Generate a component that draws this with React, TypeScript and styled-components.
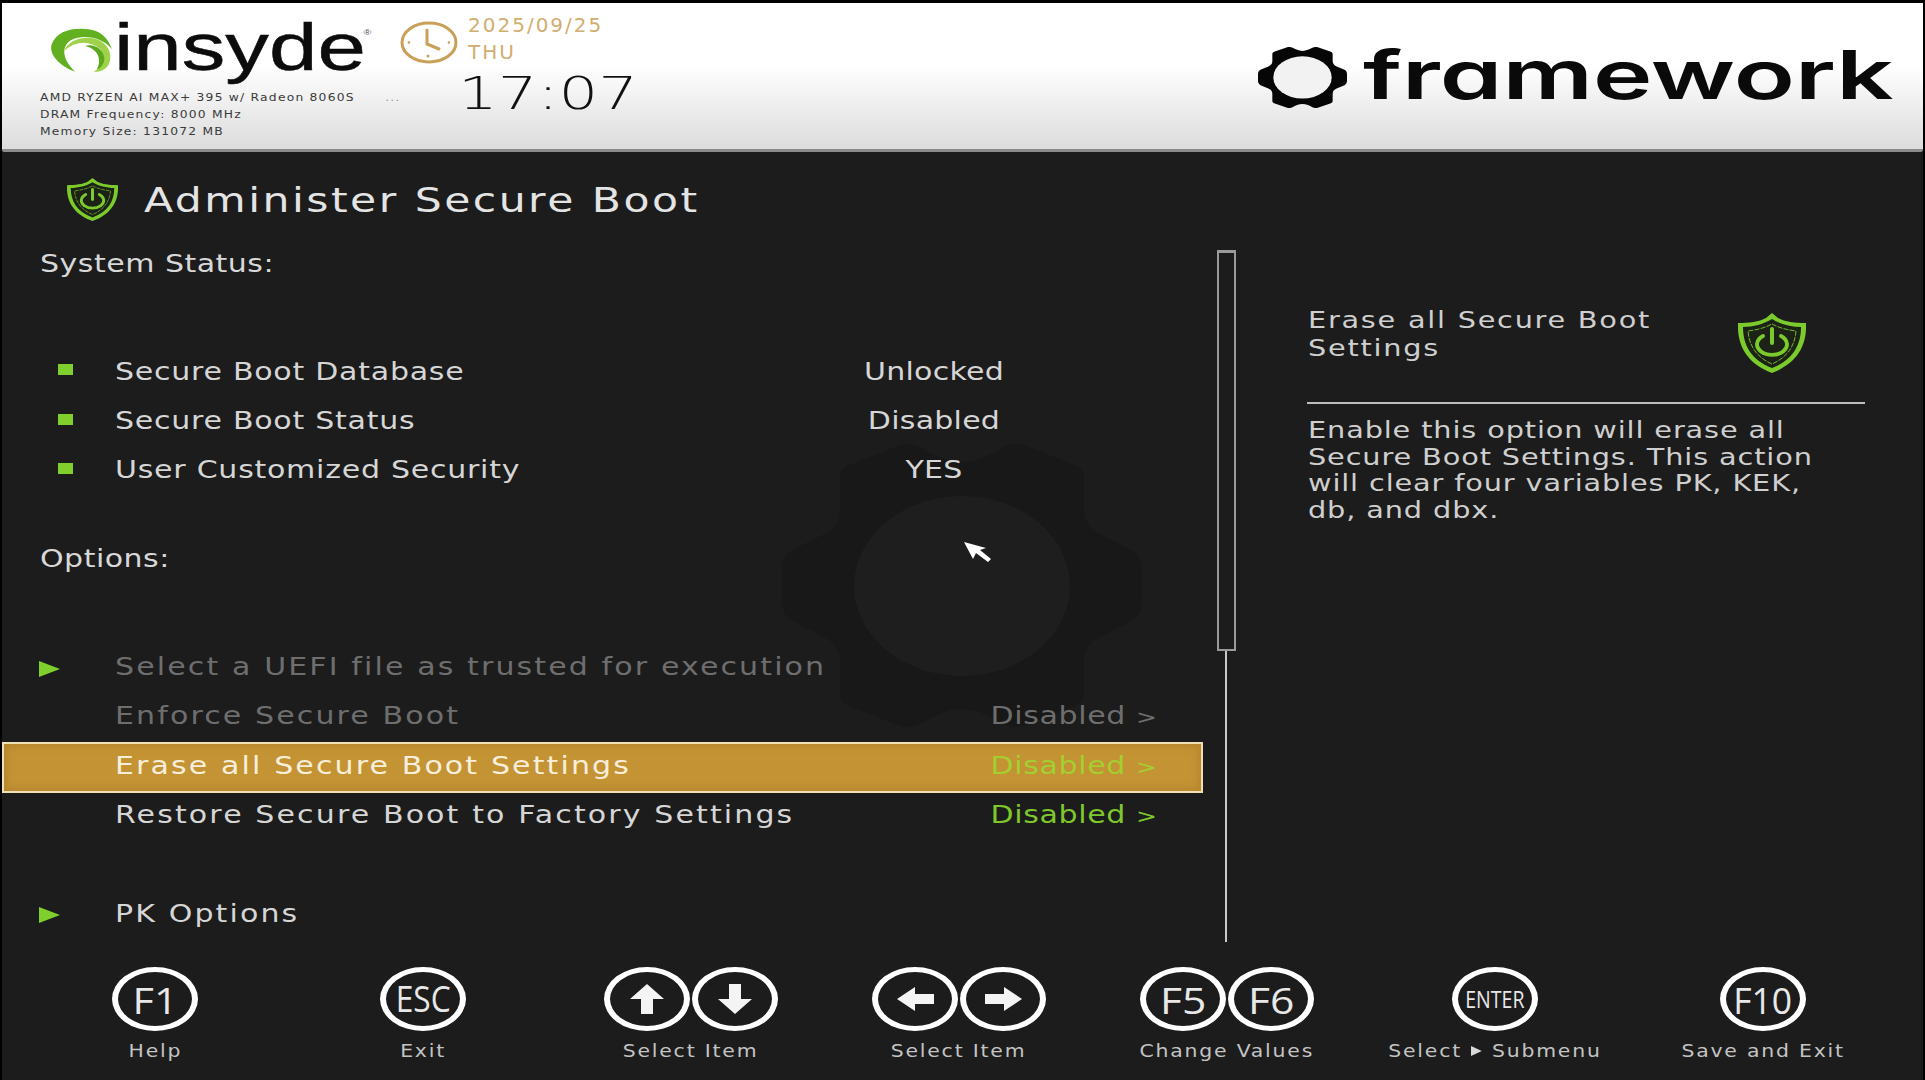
import React from 'react';
import styled, { createGlobalStyle } from 'styled-components';

const Global = createGlobalStyle`
  html, body { margin: 0; padding: 0; background: #000; overflow: hidden; }
  * { box-sizing: border-box; }
`;

const FONT = `"DejaVu Sans", "Liberation Sans", sans-serif`;

const Frame = styled.div`
  width: 1925px; height: 1080px; padding: 3px 2px 0; background: #000;
  display: flex; flex-direction: column; overflow: hidden; position: relative;
  font-family: ${FONT};
`;
const Header = styled.header`
  height: 149px; flex: none; display: flex; position: relative;
  background: linear-gradient(#fff 0, #fff 42%, #dcdcdc 100%);
  border-bottom: 3px solid #8b8b8b;
  border-radius: 0 0 2px 2px;
`;
const Brand = styled.div`
  width: 398px; padding-left: 38px; display: flex; flex-direction: column;
`;
const LogoRow = styled.div`
  height: 86px; padding: 25px 0 0 10px; display: flex; align-items: flex-start;
`;
const InsydeWord = styled.span`
  display: inline-block; font: 400 66px/1 "Liberation Sans", sans-serif; color: #0c0c0c;
  transform: scaleX(1.32); transform-origin: left top; margin: -14px 0 0 2px;
  -webkit-text-stroke: 0.5px #0c0c0c; position: relative;
  sup { position: absolute; font-size: 8px; top: 15px; left: 189px; -webkit-text-stroke: 0; color:#555; }
`;
const InfoLine = styled.div`
  height: 17px; line-height: 17px; font-size: 10.5px; letter-spacing: 1.05px; color: #3a3a3a; white-space: nowrap;
  transform: scaleX(1.17); transform-origin: left center;
  span { color: #999; margin-left: 26px; }
`;
const ClockBlock = styled.div`
  width: 300px; display: flex; align-items: flex-start;
`;
const ClockFace = styled.svg`
  width: 58px; height: 43px; flex: none; margin-top: 18px;
`;
const DateCol = styled.div`
  margin-left: 10px; padding-top: 9px; display: flex; flex-direction: column; align-items: flex-start;
`;
const DateText = styled.div`
  font-size: 20px; line-height: 27px; letter-spacing: 2px; color: #d2ad70; height: 27px;
`;
const TimeText = styled.div`
  font-size: 44px; font-weight: 300; line-height: 44px; color: #111; margin: 6px 0 0 -10px;
  display: inline-block; transform: scaleX(1.42); transform-origin: left center;
`;
const FrameworkBrand = styled.div`
  margin-left: auto; width: 665px; padding: 44px 0 0 0; display: flex; align-items: flex-start; position: relative;
`;
const GearMark = styled.svg`
  width: 89px; height: 61px; flex: none; margin-top: 0;
`;
const FrameworkWord = styled.span`
  display: inline-block; margin: -12px 0 0 16px; font: 600 67px/80px Inter, sans-serif; color: #0a0a0a;
  font-feature-settings: "cv11" 1; transform: scaleX(1.5); transform-origin: left top;
`;

const Body = styled.main`
  flex: 1; background: #1c1c1c; position: relative; display: flex; flex-direction: column; min-height: 0;
`;
const Watermark = styled.svg`
  position: absolute; left: 780px; top: 292px; width: 360px; height: 283px;
`;
const Cursor = styled.svg`
  position: absolute; left: 960px; top: 389px; width: 31px; height: 22px; z-index: 3;
`;
const TitleRow = styled.div`
  height: 87px; flex: none; padding: 8px 0 0 65px; display: flex; align-items: center; position: relative;
`;
const TitleText = styled.h1`
  margin: 0 0 0 26px; font-size: 34px; font-weight: 400; letter-spacing: 2px; color: #e4e4e4; white-space: nowrap;
  transform: scaleX(1.25); transform-origin: left center;
`;
const Columns = styled.div`
  height: 704px; flex: none; display: flex; position: relative;
`;
const List = styled.section`
  width: 1201px; flex: none; display: flex; flex-direction: column;
`;
const Row = styled.div<{ $dim?: boolean; $sel?: boolean; $gap?: number; $tight?: boolean }>`
  height: 49.25px; flex: none; display: flex; align-items: center; position: relative; padding-top: 1px;
  margin-top: ${p => p.$gap ?? 0}px;
  font-size: 24px; letter-spacing: ${p => (p.$tight ? 0.6 : 1.7)}px; white-space: nowrap;
  color: ${p => (p.$dim ? '#6e6e6e' : p.$sel ? '#f7eedb' : '#d6d6d6')};
  ${p => p.$sel ? `&::before { content: ''; position: absolute; left: 0; right: 0; top: 1px; height: 47px;
    background: #c49334; border: 2px solid #efe0b8; box-shadow: inset 0 0 7px 3px #b5862e; }` : ''}
`;
const Heading = styled(Row)`
  padding-left: 38px; color: #d8d8d8; letter-spacing: 0.4px;
`;
const HeadingText = styled.span`
  display: inline-block; transform: scaleX(1.25); transform-origin: left center;
`;
const Marker = styled.div`
  width: 113px; flex: none; padding-left: 37px; display: flex; align-items: center; position: relative;
`;
const Bullet = styled.i`
  display: block; width: 15px; height: 11px; margin: -4px 0 0 19px; background: #7fd02c;
`;
const Arrow = styled.i`
  display: block; width: 0; height: 0; border-left: 21px solid #7fd02c;
  border-top: 8px solid transparent; border-bottom: 8px solid transparent; margin-top: 3px;
`;
const Label = styled.span`
  position: relative; flex: none; display: inline-block; transform: scaleX(1.25); transform-origin: left center;
`;
const StatusValue = styled.span`
  position: absolute; left: 732px; width: 400px; text-align: center; letter-spacing: 0.2px;
  transform: scaleX(1.25); transform-origin: center;
`;
const OptionValue = styled.span<{ $c?: string }>`
  margin-left: auto; margin-right: 45px; position: relative; color: ${p => p.$c}; letter-spacing: 0.5px;
  display: inline-block; transform: scaleX(1.25); transform-origin: right center;
  small { font-size: 20px; }
`;
const Track = styled.div`
  width: 20px; flex: none; margin: 11px 0 0 13px; display: flex; flex-direction: column; align-items: center; height: 692px;
`;
const Thumb = styled.div`
  width: 19px; height: 401px; flex: none; border: 2px solid #9a9a9a; border-top-width: 3px; background: #1c1c1c;
`;
const Rail = styled.div`
  width: 2px; flex: 1; background: #c8c8c8;
`;
const Help = styled.aside`
  margin-left: 71px; width: 558px; padding-top: 66px; color: #cfcfcf; font-size: 23px;
`;
const HelpHead = styled.div`
  height: 99px; border-bottom: 2px solid #bdbdbd; display: flex; justify-content: space-between; align-items: flex-start; padding-left: 1px;
`;
const HelpTitle = styled.div`
  line-height: 28px; width: 330px; margin-top: 1px; letter-spacing: 1.4px; transform: scaleX(1.25); transform-origin: left top;
`;
const HelpShield = styled.div`
  margin: 8px 59px 0 0;
`;
const HelpBody = styled.p`
  margin: 13px 0 0 1px; line-height: 26.7px; width: 430px; letter-spacing: 0.7px; transform: scaleX(1.25); transform-origin: left top;
`;
const Footer = styled.footer`
  flex: 1; display: flex; padding: 0 0 0 19px; align-items: flex-start; position: relative;
`;
const Action = styled.div`
  width: 268px; flex: none; display: flex; flex-direction: column; align-items: center; padding-top: 24px;
`;
const Keys = styled.div`
  display: flex; gap: 2px; height: 64px;
`;
const Key = styled.div`
  width: 86px; height: 64px; border: 5px solid #fff; border-left-width: 6px; border-right-width: 6px; border-radius: 50%;
  display: flex; align-items: center; justify-content: center; color: #e8e8e8;
`;
const KeyText = styled.span<{ $size: number; $squeeze: number }>`
  display: inline-block; font: 400 ${p => p.$size}px/1 "Open Sans", sans-serif; white-space: nowrap;
  transform: scaleX(${p => p.$squeeze});
`;
const ActionLabel = styled.div`
  margin-top: 10px; font-size: 17px; line-height: 20px; letter-spacing: 1.5px; color: #c4c4c4; white-space: nowrap;
  display: flex; align-items: center; transform: scaleX(1.2);
`;
const TinyArrow = styled.i`
  display: inline-block; width: 0; height: 0; margin: 0 8px; border-left: 9px solid #d8d8d8;
  border-top: 5px solid transparent; border-bottom: 5px solid transparent;
`;

const GEAR = 'M121 0 C128 -1 133 1 140 4 C150 10 165 18 180 18 C195 18 210 10 220 4 C227 1 232 -1 239 0 L295 22 C300 25 302 28 302 35 L302 65 C302 78 308 85 318 90 L350 106 C357 110 360 118 360 126 L360 157 C360 165 357 173 350 177 L318 193 C308 198 302 205 302 218 L302 248 C302 255 300 258 295 261 L239 283 C232 284 227 282 220 279 C210 273 195 265 180 265 C165 265 150 273 140 279 C133 282 128 284 121 283 L65 261 C60 258 58 255 58 248 L58 218 C58 205 52 198 42 193 L10 177 C3 173 0 165 0 157 L0 126 C0 118 3 110 10 106 L42 90 C52 85 58 78 58 65 L58 35 C58 28 60 25 65 22 Z';

const ShieldIcon = ({ w, h }: { w: number; h: number }) => (
  <svg width={w} height={h} viewBox="0 0 68 60" preserveAspectRatio="none" style={{ display: 'block' }}>
    <path d="M34 0 L40 5 C47 9 57 10 68 10 C69 32 60 50 34 60 C8 50 -1 32 0 10 C11 10 21 9 28 5 Z" fill="#7ccb2c" />
    <path d="M34 6 C42 11 53 14 63 14 C63 32 55 47 34 55 C13 47 5 32 5 14 C15 14 26 11 34 6 Z" fill="#1c2316" />
    <path d="M34 11 C41 15 50 17 58 18 C57 32 50 44 34 51 C18 44 11 32 10 18 C18 17 27 15 34 11 Z" fill="none" stroke="#7ccb2c" strokeWidth="0.9" strokeDasharray="5 1.2" />
    <path d="M25 23 A15 10.5 0 1 0 43 23" fill="none" stroke="#7ccb2c" strokeWidth="3.8" strokeLinecap="round" />
    <path d="M34 16 L34 30" stroke="#7ccb2c" strokeWidth="4" strokeLinecap="round" />
  </svg>
);

const VerticalArrow = ({ down }: { down?: boolean }) => (
  <svg width="34" height="30" viewBox="0 0 34 30" style={{ transform: down ? 'scaleY(-1)' : undefined }}>
    <path d="M17 0 L34 15 L23 15 L23 30 L11 30 L11 15 L0 15 Z" fill="#f4f4f4" />
  </svg>
);
const HorizontalArrow = ({ left }: { left?: boolean }) => (
  <svg width="37" height="24" viewBox="0 0 37 24" style={{ transform: left ? 'scaleX(-1)' : undefined }}>
    <path d="M37 12 L19 24 L19 17 L0 17 L0 7 L19 7 L19 0 Z" fill="#f4f4f4" />
  </svg>
);

const T = ({ s, q = 1, children }: { s: number; q?: number; children: React.ReactNode }) => (
  <KeyText $size={s} $squeeze={q}>{children}</KeyText>
);

const actions: { keys: React.ReactNode[]; label: React.ReactNode }[] = [
  { keys: [<T s={37} q={1.12}>F1</T>], label: 'Help' },
  { keys: [<T s={36} q={0.88}>ESC</T>], label: 'Exit' },
  { keys: [<VerticalArrow />, <VerticalArrow down />], label: 'Select Item' },
  { keys: [<HorizontalArrow left />, <HorizontalArrow />], label: 'Select Item' },
  { keys: [<T s={37} q={1.15}>F5</T>, <T s={37} q={1.15}>F6</T>], label: 'Change Values' },
  { keys: [<T s={23} q={0.85}>ENTER</T>], label: <>Select<TinyArrow />Submenu</> },
  { keys: [<T s={37} q={0.96}>F10</T>], label: 'Save and Exit' },
];

export default function App() {
  return (
    <Frame>
      <Global />
      <Header>
        <Brand>
          <LogoRow>
            <svg width="62" height="44" viewBox="30 38 185 128" preserveAspectRatio="none">
              <path d="M105 165 C60 150 25 115 35 85 C50 45 100 35 150 42 C185 48 205 70 215 100 C190 65 130 55 95 72 C65 88 62 125 105 165 Z" fill="#62b01f" />
              <path d="M72 105 C85 70 140 55 180 75 C205 90 218 115 205 145 C195 160 175 168 160 165 C190 150 200 120 180 100 C150 72 105 75 72 105 Z" fill="#9ed24a" />
              <path d="M135 90 C165 82 195 105 192 130 C190 145 180 155 170 158 C185 130 175 100 135 90 Z" fill="#5aa81c" />
            </svg>
            <InsydeWord>insyde<sup>®</sup></InsydeWord>
          </LogoRow>
          <InfoLine>AMD RYZEN AI MAX+ 395 w/ Radeon 8060S<span>...</span></InfoLine>
          <InfoLine>DRAM Frequency: 8000 MHz</InfoLine>
          <InfoLine>Memory Size: 131072 MB</InfoLine>
        </Brand>
        <ClockBlock>
          <ClockFace viewBox="0 0 58 43">
            <ellipse cx="29" cy="21.5" rx="27" ry="19.5" fill="none" stroke="#c9a059" strokeWidth="3" />
            <path d="M27 9 L27 23 L39 28" fill="none" stroke="#c9a059" strokeWidth="3" strokeLinejoin="round" strokeLinecap="round" />
            <circle cx="9" cy="21.5" r="1.3" fill="#c9a059" />
            <circle cx="49" cy="21.5" r="1.3" fill="#c9a059" />
            <circle cx="28" cy="35" r="1.5" fill="#c9a059" />
          </ClockFace>
          <DateCol>
            <DateText>2025/09/25</DateText>
            <DateText>THU</DateText>
            <TimeText>17:07</TimeText>
          </DateCol>
        </ClockBlock>
        <FrameworkBrand>
          <GearMark viewBox="0 0 360 283" preserveAspectRatio="none">
            <path d={GEAR} fill="#060606" />
            <ellipse cx="180" cy="141" rx="118" ry="98" fill="#f2f2f2" />
          </GearMark>
          <FrameworkWord>framework</FrameworkWord>
        </FrameworkBrand>
      </Header>
      <Body>
        <Watermark viewBox="0 0 360 283">
          <path d={GEAR} fill="#181818" />
          <ellipse cx="180" cy="142" rx="108" ry="90" fill="#1e1e1e" />
        </Watermark>
        <Cursor viewBox="0 0 31 22">
          <path d="M2 1 L11 18 L14 12 L26 21 L29 18 L18 9 L24 7 Z" fill="#fff" />
        </Cursor>
        <TitleRow>
          <ShieldIcon w={51} h={43} />
          <TitleText>Administer Secure Boot</TitleText>
        </TitleRow>
        <Columns>
          <List>
            <Heading $tight><HeadingText>System Status:</HeadingText></Heading>
            <Row $tight $gap={58.5}><Marker><Bullet /></Marker><Label>Secure Boot Database</Label><StatusValue>Unlocked</StatusValue></Row>
            <Row $tight><Marker><Bullet /></Marker><Label>Secure Boot Status</Label><StatusValue>Disabled</StatusValue></Row>
            <Row $tight><Marker><Bullet /></Marker><Label>User Customized Security</Label><StatusValue>YES</StatusValue></Row>
            <Heading $tight $gap={39.5}><HeadingText>Options:</HeadingText></Heading>
            <Row $gap={58.75} $dim><Marker><Arrow /></Marker><Label>Select a UEFI file as trusted for execution</Label></Row>
            <Row $dim><Marker /><Label>Enforce Secure Boot</Label><OptionValue $c="#6e6e6e">Disabled <small>&gt;</small></OptionValue></Row>
            <Row $sel><Marker /><Label>Erase all Secure Boot Settings</Label><OptionValue $c="#a3cf30">Disabled <small>&gt;</small></OptionValue></Row>
            <Row><Marker /><Label>Restore Secure Boot to Factory Settings</Label><OptionValue $c="#7fc82c">Disabled <small>&gt;</small></OptionValue></Row>
            <Row $gap={49.5}><Marker><Arrow /></Marker><Label>PK Options</Label></Row>
          </List>
          <Track><Thumb /><Rail /></Track>
          <Help>
            <HelpHead>
              <HelpTitle>Erase all Secure Boot Settings</HelpTitle>
              <HelpShield><ShieldIcon w={68} h={60} /></HelpShield>
            </HelpHead>
            <HelpBody>Enable this option will erase all Secure Boot Settings. This action will clear four variables PK, KEK, db, and dbx.</HelpBody>
          </Help>
        </Columns>
        <Footer>
          {actions.map((a, i) => (
            <Action key={i}>
              <Keys>
                {a.keys.map((k, j) => <Key key={j}>{k}</Key>)}
              </Keys>
              <ActionLabel>{a.label}</ActionLabel>
            </Action>
          ))}
        </Footer>
      </Body>
    </Frame>
  );
}
